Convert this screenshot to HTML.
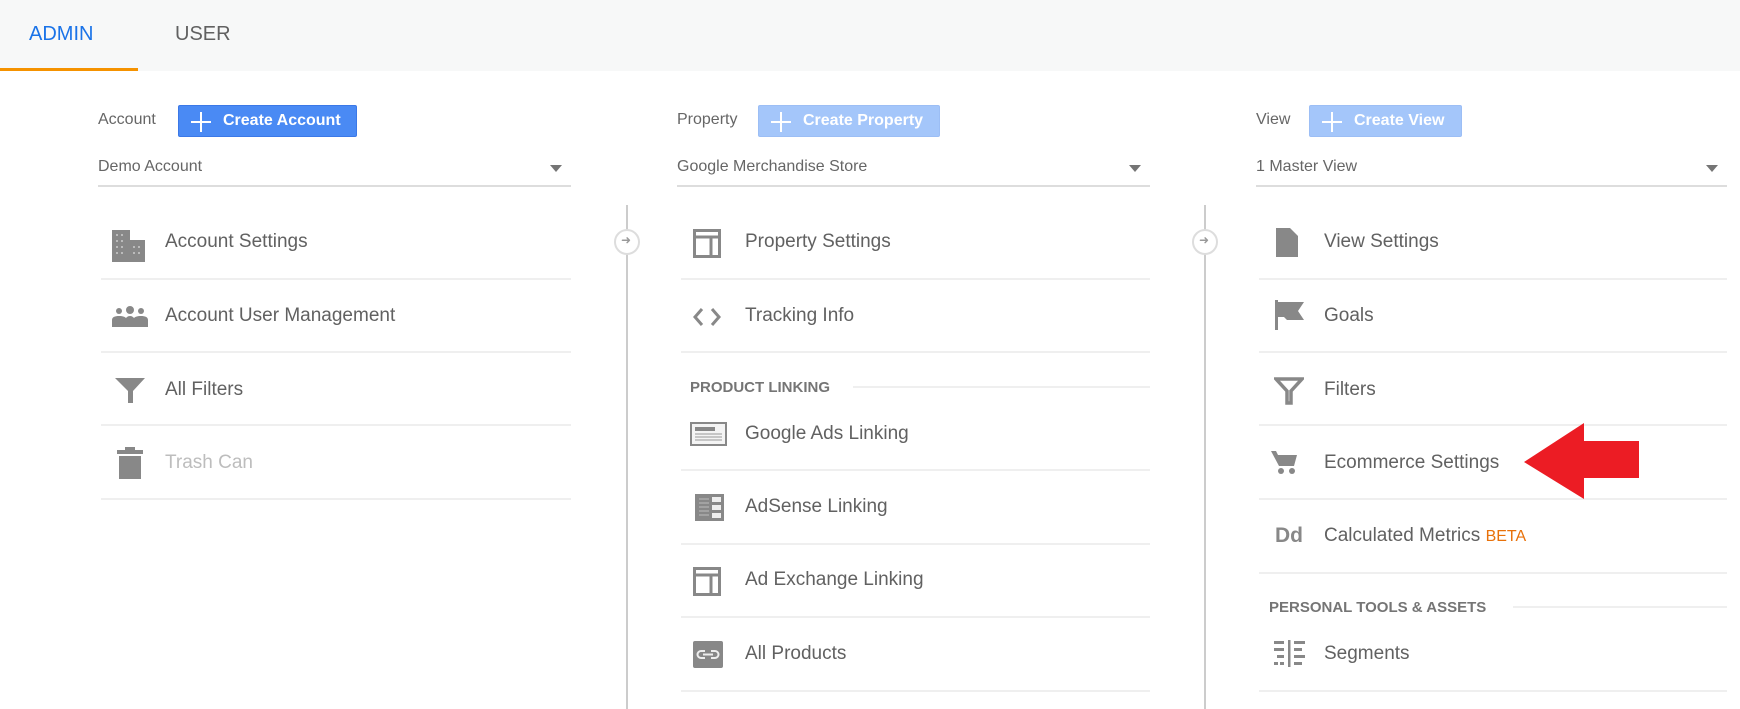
<!DOCTYPE html>
<html><head><meta charset="utf-8"><style>
*{margin:0;padding:0;box-sizing:border-box}
body{width:1740px;height:709px;background:#fff;position:relative;overflow:hidden;font-family:"Liberation Sans",Arial,sans-serif;color:#616161}
.a{position:absolute;white-space:nowrap}
.hdr{left:0;top:0;width:1740px;height:71px;background:#f7f8f8}
.tab{font-size:20px;top:23px}
.lbl{font-size:16px;color:#666}
.btn{height:32px;border-radius:2px;color:#fff;font-weight:bold;font-size:16px;line-height:30px;padding-left:44px;border:1px solid #3b78e7;background:#4a8af4}
.btn.l{background:#a4c6fa;border-color:#9cbef5}
.btn:before{content:"";position:absolute;left:12px;top:6px;width:20px;height:20px;background:linear-gradient(#fff,#fff) center/2px 20px no-repeat,linear-gradient(#fff,#fff) center/20px 2px no-repeat}
.dd{font-size:16px;color:#666}
.ul{height:2px;background:#ddd}
.tri{width:0;height:0;border-left:6px solid transparent;border-right:6px solid transparent;border-top:7px solid #757575}
.it{font-size:19px;color:#616161}
.sep{height:2px;background:#efefef}
.sec{font-size:15px;font-weight:bold;color:#757575}
.vl{width:2px;background:#ccc;top:205px;height:504px}
.cir{width:26px;height:26px;border-radius:50%;border:2px solid #ddd;background:#fff;top:229px}
.cir:after{content:"➜";position:absolute;left:5px;top:2px;font-size:12px;color:#999}
svg{position:absolute}
</style></head><body>
<div class="a hdr"></div>
<div class="a" style="left:0;top:68px;width:138px;height:3px;background:#f59200"></div>
<div class="a tab" style="left:29px;color:#1a73e8">ADMIN</div>
<div class="a tab" style="left:175px;color:#616161">USER</div>

<!-- column headers -->
<div class="a lbl" style="left:98px;top:111px">Account</div>
<div class="a btn" style="left:178px;top:105px;width:179px">Create Account</div>
<div class="a lbl" style="left:677px;top:111px">Property</div>
<div class="a btn l" style="left:758px;top:105px;width:182px">Create Property</div>
<div class="a lbl" style="left:1256px;top:111px">View</div>
<div class="a btn l" style="left:1309px;top:105px;width:153px">Create View</div>

<div class="a dd" style="left:98px;top:158px">Demo Account</div>
<div class="a tri" style="left:550px;top:165px"></div>
<div class="a ul" style="left:98px;top:185px;width:473px"></div>
<div class="a dd" style="left:677px;top:158px">Google Merchandise Store</div>
<div class="a tri" style="left:1129px;top:165px"></div>
<div class="a ul" style="left:677px;top:185px;width:473px"></div>
<div class="a dd" style="left:1256px;top:158px">1 Master View</div>
<div class="a tri" style="left:1706px;top:165px"></div>
<div class="a ul" style="left:1256px;top:185px;width:471px"></div>

<div class="a vl" style="left:626px"></div>
<div class="a cir" style="left:614px"></div>
<div class="a vl" style="left:1204px"></div>
<div class="a cir" style="left:1192px"></div>

<!-- left column -->
<svg style="left:112px;top:230px" width="34" height="32" viewBox="0 0 34 32"><path d="M0 0h18v10h15v22H0z" fill="#888"/><g fill="#bbb"><rect x="4" y="4" width="2" height="2"/><rect x="9" y="4" width="2" height="2"/><rect x="4" y="10" width="2" height="2"/><rect x="9" y="10" width="2" height="2"/><rect x="4" y="16" width="2" height="2"/><rect x="9" y="16" width="2" height="2"/><rect x="21" y="16" width="2" height="2"/><rect x="26" y="16" width="2" height="2"/><rect x="4" y="22" width="2" height="2"/><rect x="9" y="22" width="2" height="2"/><rect x="21" y="22" width="2" height="2"/><rect x="26" y="22" width="2" height="2"/></g></svg>
<div class="a it" style="left:165px;top:231px">Account Settings</div>
<div class="a sep" style="left:101px;top:278px;width:470px"></div>
<svg style="left:112px;top:306px" width="36" height="22" viewBox="0 0 36 22"><g fill="#888"><circle cx="7" cy="5" r="3"/><circle cx="18" cy="4" r="4"/><circle cx="29" cy="5" r="3"/><path d="M0 14c0-3 3-4 7-4s6 1 7 2c1-1 2-2 4-2s3 1 4 2c1-1 3-2 7-2s7 1 7 4v7H0z"/></g></svg>
<div class="a it" style="left:165px;top:305px">Account User Management</div>
<div class="a sep" style="left:101px;top:351px;width:470px"></div>
<svg style="left:115px;top:378px" width="30" height="26" viewBox="0 0 30 26"><path d="M0 0h30L18 13v12h-5V13z" fill="#888"/></svg>
<div class="a it" style="left:165px;top:379px">All Filters</div>
<div class="a sep" style="left:101px;top:424px;width:470px"></div>
<svg style="left:117px;top:447px" width="26" height="32" viewBox="0 0 26 32"><path d="M8 0h10v3h8v4H0V3h8zM2 9h22v23H2z" fill="#888"/></svg>
<div class="a it" style="left:165px;top:452px;color:#bdbdbd">Trash Can</div>
<div class="a sep" style="left:101px;top:498px;width:470px"></div>

<!-- middle column -->
<svg style="left:693px;top:229px" width="28" height="29" viewBox="0 0 28 29"><path d="M1.5 1.5h25v26h-25zM1.5 8h25M18 8v19.5" fill="none" stroke="#888" stroke-width="3"/></svg>
<div class="a it" style="left:745px;top:231px">Property Settings</div>
<div class="a sep" style="left:681px;top:278px;width:469px"></div>
<svg style="left:692px;top:307px" width="30" height="20" viewBox="0 0 30 20"><path d="M10 2L3 10l7 8M20 2l7 8-7 8" fill="none" stroke="#888" stroke-width="3"/></svg>
<div class="a it" style="left:745px;top:305px">Tracking Info</div>
<div class="a sep" style="left:681px;top:351px;width:469px"></div>
<div class="a sec" style="left:690px;top:379px">PRODUCT LINKING</div>
<div class="a sep" style="left:853px;top:386px;width:297px"></div>
<svg style="left:690px;top:422px" width="37" height="24" viewBox="0 0 37 24"><rect x="1" y="1" width="35" height="22" fill="#f4f4f4" stroke="#888" stroke-width="2"/><rect x="5" y="5" width="20" height="4" fill="#888"/><path d="M5 12h27M5 15h27M5 18h27" stroke="#999"/></svg>
<div class="a it" style="left:745px;top:423px">Google Ads Linking</div>
<div class="a sep" style="left:681px;top:469px;width:469px"></div>
<svg style="left:695px;top:494px" width="29" height="27" viewBox="0 0 29 27"><rect width="29" height="27" fill="#888"/><path d="M4 5h10M4 9h10M4 13h10M4 17h10M4 21h10" stroke="#bbb"/><rect x="17" y="3" width="9" height="5" fill="#eee"/><rect x="17" y="11" width="9" height="5" fill="#eee"/><rect x="17" y="19" width="9" height="5" fill="#eee"/></svg>
<div class="a it" style="left:745px;top:496px">AdSense Linking</div>
<div class="a sep" style="left:681px;top:543px;width:469px"></div>
<svg style="left:693px;top:567px" width="28" height="29" viewBox="0 0 28 29"><path d="M1.5 1.5h25v26h-25zM1.5 8h25M18 8v19.5" fill="none" stroke="#888" stroke-width="3"/></svg>
<div class="a it" style="left:745px;top:569px">Ad Exchange Linking</div>
<div class="a sep" style="left:681px;top:616px;width:469px"></div>
<svg style="left:693px;top:641px" width="30" height="27" viewBox="0 0 30 27"><rect width="30" height="27" rx="2" fill="#888"/><path d="M12 10H8a3.5 3.5 0 000 7h4M18 10h4a3.5 3.5 0 010 7h-4M10 13.5h10" fill="none" stroke="#eee" stroke-width="2"/></svg>
<div class="a it" style="left:745px;top:643px">All Products</div>
<div class="a sep" style="left:681px;top:690px;width:469px"></div>

<!-- right column -->
<svg style="left:1276px;top:228px" width="22" height="29" viewBox="0 0 22 29"><path d="M0 0h14l8 8v21H0z" fill="#888"/></svg>
<div class="a it" style="left:1324px;top:231px">View Settings</div>
<div class="a sep" style="left:1259px;top:278px;width:468px"></div>
<svg style="left:1274px;top:300px" width="30" height="30" viewBox="0 0 30 30"><path d="M1 0h3v30H1zM4 2h26l-6 9 6 9H13l-3-3H4z" fill="#888"/></svg>
<div class="a it" style="left:1324px;top:305px">Goals</div>
<div class="a sep" style="left:1259px;top:351px;width:468px"></div>
<svg style="left:1274px;top:377px" width="30" height="28" viewBox="0 0 30 28"><path d="M2 2h26L17 14v12h-4V14z" fill="none" stroke="#888" stroke-width="3.5"/></svg>
<div class="a it" style="left:1324px;top:379px">Filters</div>
<div class="a sep" style="left:1259px;top:424px;width:468px"></div>
<svg style="left:1271px;top:451px" width="28" height="25" viewBox="0 0 28 25"><path d="M0 0h5l2 4h19l-3 11H8z" fill="#888"/><circle cx="10" cy="20" r="3" fill="#888"/><circle cx="21" cy="20" r="3" fill="#888"/></svg>
<div class="a it" style="left:1324px;top:452px">Ecommerce Settings</div>
<div class="a sep" style="left:1259px;top:498px;width:468px"></div>
<div class="a" style="left:1275px;top:524px;font-size:21px;font-weight:bold;color:#888">Dd</div>
<div class="a it" style="left:1324px;top:525px">Calculated Metrics <span style="font-size:16px;color:#e8710a">BETA</span></div>
<div class="a sep" style="left:1259px;top:572px;width:468px"></div>
<div class="a sec" style="left:1269px;top:599px">PERSONAL TOOLS &amp; ASSETS</div>
<div class="a sep" style="left:1513px;top:606px;width:214px"></div>
<svg style="left:1274px;top:640px" width="32" height="27" viewBox="0 0 32 27"><g fill="#888"><rect x="0" y="1" width="10" height="3"/><rect x="0" y="8" width="10" height="3"/><rect x="3" y="15" width="7" height="3"/><rect x="0" y="22" width="4" height="3"/><rect x="6" y="22" width="4" height="3"/><rect x="14" y="0" width="2.5" height="27"/><rect x="20" y="1" width="11" height="3"/><rect x="20" y="8" width="8" height="3"/><rect x="20" y="15" width="11" height="3"/><rect x="20" y="22" width="8" height="3"/></g></svg>
<div class="a it" style="left:1324px;top:643px">Segments</div>
<div class="a sep" style="left:1259px;top:690px;width:468px"></div>

<!-- red arrow -->
<svg style="left:1520px;top:420px" width="125" height="82" viewBox="0 0 125 82"><path d="M4 42L64 3v18h55v37H64v21z" fill="#ec1c24"/></svg>
</body></html>
